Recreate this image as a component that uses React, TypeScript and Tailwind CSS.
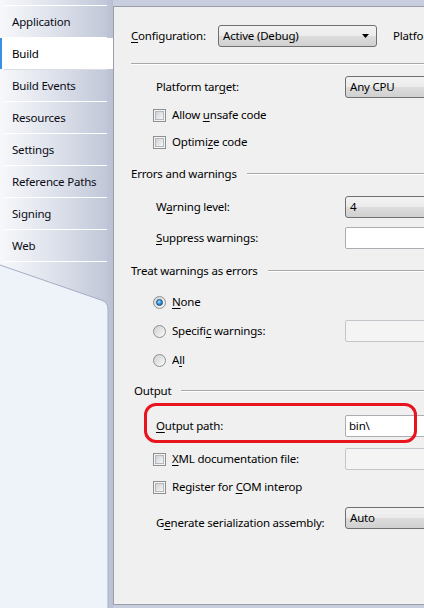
import React from 'react';

const font = { fontFamily: '"Segoe UI", "Noto Sans", "Open Sans", sans-serif' };

const tabs = ['Application', 'Build', 'Build Events', 'Resources', 'Settings', 'Reference Paths', 'Signing', 'Web'];

const M: React.FC<{ children: React.ReactNode }> = ({ children }) => (
  <span className="underline underline-offset-[2px] decoration-[1px]">{children}</span>
);

const Checkbox: React.FC = () => (
  <div className="w-[13px] h-[13px] shrink-0 border border-[#8e8f8f] bg-[#f4f4f4] p-[1px]">
    <div className="w-full h-full border border-[#b4b7bb] bg-[linear-gradient(135deg,#cfd1d4,#f7f7f7)]" />
  </div>
);

const Radio: React.FC<{ checked?: boolean }> = ({ checked }) => (
  <div className="w-[13px] h-[13px] shrink-0 rounded-full border border-[#8e8f8f] bg-[linear-gradient(135deg,#cdcfd2,#fbfbfb)] flex items-center justify-center">
    {checked && (
      <div className="w-[7px] h-[7px] rounded-full border border-[#1b4f82] bg-[radial-gradient(circle_at_40%_35%,#9ee0ff,#2a8ad8_55%,#0f4e91)]" />
    )}
  </div>
);

const Dropdown: React.FC<{ value: string; width: string; arrow?: boolean }> = ({ value, width, arrow }) => (
  <div
    className={`${width} h-[22px] shrink-0 rounded-[3px] border border-[#707070] bg-[linear-gradient(#f3f3f3,#ebebeb_50%,#dddddd_50%,#d0d0d0)] flex items-center pl-[4px] pr-[7px]`}
  >
    <span className="flex-1 leading-none">{value}</span>
    {arrow && (
      <svg width="7" height="4" viewBox="0 0 7 4">
        <path d="M0 0 H7 L3.5 4 Z" fill="#000" />
      </svg>
    )}
  </div>
);

const TextBox: React.FC<{ value?: string; disabled?: boolean }> = ({ value, disabled }) => (
  <div
    className={`w-[120px] h-[22px] shrink-0 rounded-[2px] border flex items-center pl-[3px] ${
      disabled ? 'bg-[#f4f4f4] border-[#c3c6cb]' : 'bg-white border-[#abadb3]'
    }`}
  >
    {value}
  </div>
);

const Header: React.FC<{ title: string; pl: string; mt: string }> = ({ title, pl, mt }) => (
  <div className={`h-[20px] flex items-center ${pl} ${mt}`}>
    <span>{title}</span>
    <div className="flex-1 ml-[10px] border-t border-[#a8a8a8] border-b border-b-white" />
  </div>
);

const FieldRow: React.FC<{ label: React.ReactNode; mt: string; children: React.ReactNode }> = ({ label, mt, children }) => (
  <div className={`h-[22px] flex items-center pl-[42px] ${mt}`}>
    <div className="w-[189px] shrink-0">{label}</div>
    {children}
  </div>
);

const CheckRow: React.FC<{ mt: string; children: React.ReactNode; radio?: boolean; checked?: boolean }> = ({
  mt,
  children,
  radio,
  checked,
}) => (
  <div className={`h-[20px] flex items-center pl-[39px] gap-[6px] ${mt}`}>
    {radio ? <Radio checked={checked} /> : <Checkbox />}
    <span>{children}</span>
  </div>
);

const TabStrip: React.FC = () => (
  <div className="w-[113px] shrink-0 flex flex-col bg-[linear-gradient(90deg,#f7f8fb,#dfe3ec_45%,#c3c9d9_92%,#b9c0d2)]">
    <div className="h-[5px]" />
    {tabs.map((t) => {
      const active = t === 'Build';
      return (
        <div key={t} className="h-[32px] flex flex-col">
          <div className={`h-px ml-[4px] w-[103px] ${t === 'Build Events' ? 'bg-[#d9dce3]' : 'bg-white'}`} />
          {active ? (
            <div className="h-[31px] w-[113px] bg-white border-l-2 border-[#3a8ee6] flex items-center pl-[10px]">{t}</div>
          ) : (
            <div className="h-[31px] flex items-center pl-[12px] text-[#0b0b14]">{t}</div>
          )}
        </div>
      );
    })}
    <div className="h-px ml-[4px] w-[103px] bg-white" />
    <svg width="113" height="346" viewBox="0 0 113 346" className="block">
      <path d="M0 3 L101 38 Q108 40 108 47 L108 346 L0 346 Z" fill="#eef2f9" />
      <path d="M0 3 L101 38 Q108 40 108 47 L108 346" fill="none" stroke="#a3adc4" strokeWidth="1" />
    </svg>
  </div>
);

export default function App() {
  return (
    <div
      style={font}
      className="w-[424px] h-[608px] overflow-hidden flex bg-[#c8cede] text-[11.5px] tracking-[-0.2px] text-black leading-[16px]"
    >
      <TabStrip />
      <div className="mt-[6px] mb-[3px] w-[330px] shrink-0 border border-[#9a9ea8] bg-[#f0f0f0] flex flex-col">
        {/* configuration row */}
        <div className="h-[22px] mt-[18px] flex items-center pl-[17px]">
          <div className="w-[87px] shrink-0">
            <M>C</M>onfiguration:
          </div>
          <Dropdown value="Active (Debug)" width="w-[159px]" arrow />
          <span className="ml-[16px]">Platform:</span>
        </div>
        <div className="mt-[16px] ml-[17px] border-t border-[#a8a8a8] border-b border-b-white" />

        <FieldRow mt="mt-[11px]" label={<>Platform tar<M>g</M>et:</>}>
          <Dropdown value="Any CPU" width="w-[120px]" />
        </FieldRow>
        <CheckRow mt="mt-[7px]">
          Allow <M>u</M>nsafe code
        </CheckRow>
        <CheckRow mt="mt-[7px]">
          Optimi<M>z</M>e code
        </CheckRow>

        <Header title="Errors and warnings" pl="pl-[17px]" mt="mt-[12px]" />
        <FieldRow mt="mt-[12px]" label={<>W<M>a</M>rning level:</>}>
          <Dropdown value="4" width="w-[120px]" />
        </FieldRow>
        <FieldRow mt="mt-[9px]" label={<><M>S</M>uppress warnings:</>}>
          <TextBox />
        </FieldRow>

        <Header title="Treat warnings as errors" pl="pl-[17px]" mt="mt-[12px]" />
        <CheckRow mt="mt-[11px]" radio checked>
          <M>N</M>one
        </CheckRow>
        <div className="h-[22px] mt-[8px] flex items-center pl-[39px]">
          <div className="w-[192px] shrink-0 flex items-center gap-[6px]">
            <Radio />
            <span>
              Specifi<M>c</M> warnings:
            </span>
          </div>
          <TextBox disabled />
        </div>
        <CheckRow mt="mt-[8px]" radio>
          A<M>l</M>l
        </CheckRow>

        <Header title="Output" pl="pl-[20px]" mt="mt-[11px]" />
        <div className="relative">
          <FieldRow mt="mt-[14px]" label={<><M>O</M>utput path:</>}>
            <TextBox value="bin\" />
          </FieldRow>
          <div className="absolute left-[30px] top-[2px] w-[273px] h-[40px] rounded-[12px] border-[3px] border-[#e8141e]" />
        </div>
        <div className="h-[22px] mt-[11px] flex items-center pl-[39px]">
          <div className="w-[192px] shrink-0 flex items-center gap-[6px]">
            <Checkbox />
            <span>
              <M>X</M>ML documentation file:
            </span>
          </div>
          <TextBox disabled />
        </div>
        <CheckRow mt="mt-[7px]">
          Register for <M>C</M>OM interop
        </CheckRow>
        <div className="h-[22px] mt-[10px] flex items-start pl-[42px]">
          <div className="w-[189px] shrink-0 mt-[8px]">
            G<M>e</M>nerate serialization assembly:
          </div>
          <Dropdown value="Auto" width="w-[120px]" />
        </div>
      </div>
    </div>
  );
}
